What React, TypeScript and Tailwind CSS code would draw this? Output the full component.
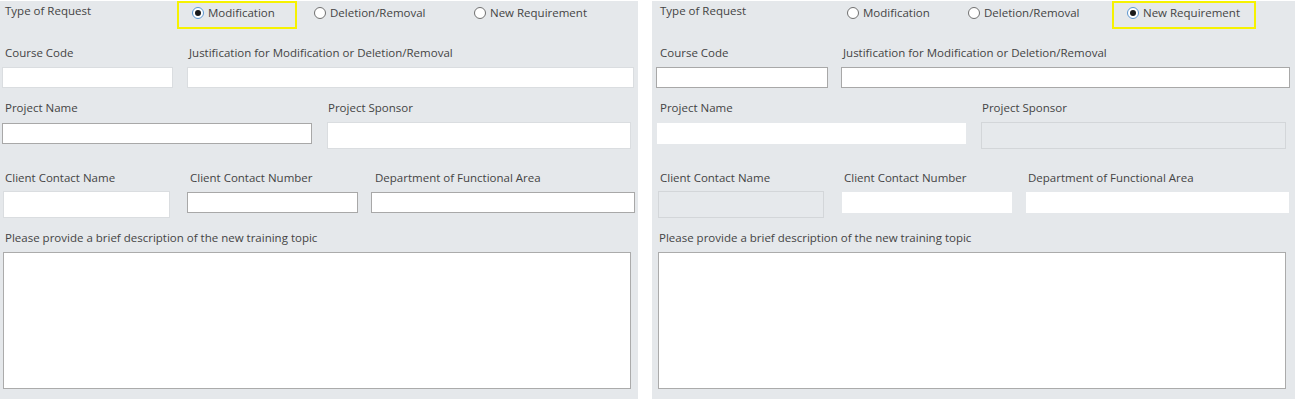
import React from 'react'

type Look = 'dark' | 'light' | 'plain' | 'off'

const LOOK: Record<Look, string> = {
  dark:  'bg-white border border-[#a8a8a8]',
  light: 'bg-white border border-[#dadde0]',
  plain: 'bg-white border border-white',
  off:   'bg-[#e6e9ec] border border-[#d3d6d9]',
}

interface FieldDef {
  label: string
  box: string     // margin + width of the whole field
  pad: string     // label indent
  input: string   // top gap + height of the input
  look: Look
}

interface PanelDef {
  labelBox: string
  radios: { label: string; box: string; checked: boolean }[]
  rows: FieldDef[][]
  desc: { box: string; pad: string }
}

const JUST = 'Justification for Modification or Deletion/Removal'

const LEFT: PanelDef = {
  labelBox: 'w-[177px] pl-[5px]',
  radios: [
    { label: 'Modification',    box: 'w-[120px]',        checked: true  },
    { label: 'Deletion/Removal', box: 'ml-[2px] w-[160px]', checked: false },
    { label: 'New Requirement', box: 'w-[144px]',        checked: false },
  ],
  rows: [
    [
      { label: 'Course Code', box: 'ml-[2px] w-[171px]',  pad: 'pl-[3px]', input: 'mt-[6px] h-[21px]', look: 'light' },
      { label: JUST,          box: 'ml-[14px] w-[447px]', pad: 'pl-[2px]', input: 'mt-[6px] h-[21px]', look: 'light' },
    ],
    [
      { label: 'Project Name',    box: 'ml-[2px] w-[310px]',  pad: 'pl-[3px]', input: 'mt-[7px] h-[21px]', look: 'dark'  },
      { label: 'Project Sponsor', box: 'ml-[15px] w-[304px]', pad: 'pl-[1px]', input: 'mt-[6px] h-[27px]', look: 'light' },
    ],
    [
      { label: 'Client Contact Name',            box: 'ml-[3px] w-[167px]',  pad: 'pl-[2px]', input: 'mt-[5px] h-[27px]', look: 'light' },
      { label: 'Client Contact Number',          box: 'ml-[17px] w-[171px]', pad: 'pl-[3px]', input: 'mt-[6px] h-[21px]', look: 'dark'  },
      { label: 'Department of Functional Area', box: 'ml-[13px] w-[264px]', pad: 'pl-[4px]', input: 'mt-[6px] h-[21px]', look: 'dark'  },
    ],
  ],
  desc: { box: 'ml-[3px] w-[628px]', pad: 'pl-[2px]' },
}

const RIGHT: PanelDef = {
  labelBox: 'w-[180px] pl-[8px]',
  radios: [
    { label: 'Modification',    box: 'w-[120px]',          checked: false },
    { label: 'Deletion/Removal', box: 'ml-[1px] w-[159px]', checked: false },
    { label: 'New Requirement', box: 'w-[144px]',          checked: true  },
  ],
  rows: [
    [
      { label: 'Course Code', box: 'ml-[4px] w-[172px]',  pad: 'pl-[4px]', input: 'mt-[6px] h-[21px]', look: 'dark' },
      { label: JUST,          box: 'ml-[13px] w-[449px]', pad: 'pl-[2px]', input: 'mt-[6px] h-[21px]', look: 'dark' },
    ],
    [
      { label: 'Project Name',    box: 'ml-[5px] w-[309px]',  pad: 'pl-[3px]', input: 'mt-[7px] h-[21px]', look: 'plain' },
      { label: 'Project Sponsor', box: 'ml-[15px] w-[305px]', pad: 'pl-[1px]', input: 'mt-[6px] h-[27px]', look: 'off'   },
    ],
    [
      { label: 'Client Contact Name',            box: 'ml-[6px] w-[166px]',  pad: 'pl-[2px]', input: 'mt-[5px] h-[27px]', look: 'off'   },
      { label: 'Client Contact Number',          box: 'ml-[18px] w-[170px]', pad: 'pl-[2px]', input: 'mt-[6px] h-[21px]', look: 'plain' },
      { label: 'Department of Functional Area', box: 'ml-[14px] w-[263px]', pad: 'pl-[2px]', input: 'mt-[6px] h-[21px]', look: 'plain' },
    ],
  ],
  desc: { box: 'ml-[6px] w-[628px]', pad: 'pl-[1px]' },
}

// row top gaps: label line box starts this far below the previous row
const ROW_GAP = ['mt-[16px]', 'mt-[12px]', 'mt-[21px]']

function Radio({ label, box, checked }: { label: string; box: string; checked: boolean }) {
  return (
    <label
      className={`${box} h-[28px] flex items-center gap-[4px] pl-[13px] pb-[4px] border-2 ${
        checked ? 'border-[#f6f200]' : 'border-transparent'
      }`}
    >
      <span
        className={`w-[12px] h-[12px] rounded-full bg-white flex items-center justify-center shrink-0 border ${
          checked ? 'border-[#5b95cf]' : 'border-[#707070]'
        }`}
      >
        {checked && <span className="w-[6px] h-[6px] rounded-full bg-[#1a1a1a]" />}
      </span>
      <span className="leading-[16px]">{label}</span>
    </label>
  )
}

function Field({ f }: { f: FieldDef }) {
  return (
    <div className={`${f.box} flex flex-col`}>
      <div className={`${f.pad} leading-[16px] whitespace-nowrap`}>{f.label}</div>
      <input
        type="text"
        disabled={f.look === 'off'}
        className={`${f.input} ${LOOK[f.look]} w-full outline-none`}
      />
    </div>
  )
}

function Panel({ p, className }: { p: PanelDef; className: string }) {
  return (
    <div className={`${className} bg-[#e5e8eb] flex flex-col`}>
      {/* Type of request */}
      <div className="flex items-start h-[28px]">
        <div className={`${p.labelBox} pt-[2px] leading-[16px]`}>Type of Request</div>
        {p.radios.map(r => <Radio key={r.label} {...r} />)}
      </div>

      {p.rows.map((row, i) => (
        <div key={i} className={`${ROW_GAP[i]} flex items-start`}>
          {row.map(f => <Field key={f.label} f={f} />)}
        </div>
      ))}

      {/* Description */}
      <div className={`${p.desc.box} mt-[12px] flex flex-col`}>
        <div className={`${p.desc.pad} leading-[16px]`}>Please provide a brief description of the new training topic</div>
        <textarea className="mt-[6px] h-[137px] w-full bg-white border border-[#ababab] resize-none outline-none" />
      </div>
    </div>
  )
}

export default function App() {
  return (
    <div className="w-[1297px] h-[399px] bg-white pt-[1px] flex font-['Open_Sans','Noto_Sans',sans-serif] text-[11.5px] text-[#444444]">
      <Panel p={LEFT} className="w-[638px] h-[398px]" />
      <Panel p={RIGHT} className="ml-[14px] w-[643px] h-[398px]" />
    </div>
  )
}
